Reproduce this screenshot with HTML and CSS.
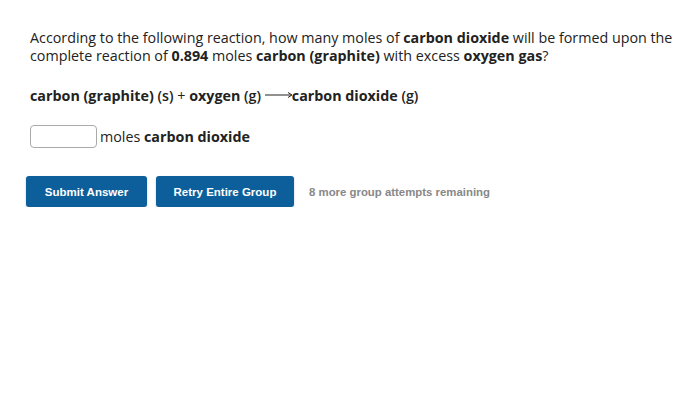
FILE: index.html
```html
<!DOCTYPE html>
<html>
<head>
<meta charset="utf-8">
<link rel="stylesheet" href="styles.css">
</head>
<body>
<div class="page">
  <p class="question">According to the following reaction, how many moles of <b>carbon dioxide</b> will be formed upon the complete reaction of <b>0.894</b> moles <b>carbon (graphite)</b> with excess <b>oxygen gas</b>?</p>
  <p class="reaction"><b>carbon (graphite)</b> <span class="st">(s)</span> + <b>oxygen</b> <span class="st">(g)</span> <span class="arrow"><svg width="28" height="8" viewBox="0 0 28 8"><line x1="0" y1="4" x2="26" y2="4" stroke="#222" stroke-width="1"/><path d="M23 1.5 L27 4 L23 6.5" fill="none" stroke="#222" stroke-width="1"/></svg></span><b>carbon dioxide</b> <span class="st">(g)</span></p>
  <div class="answer">
    <input class="box" type="text">
    <span>moles <b>carbon dioxide</b></span>
  </div>
  <div class="actions">
    <button class="btn btn-submit">Submit Answer</button>
    <button class="btn btn-retry">Retry Entire Group</button>
    <span class="remaining">8 more group attempts remaining</span>
  </div>
</div>
</body>
</html>
```
FILE: styles.css
```css
html, body {
  margin: 0;
  padding: 0;
  background: #fff;
}
.page {
  padding: 29px 10px 0 30px;
  font-family: "Open Sans", sans-serif;
  font-size: 14.3px;
  color: #222;
}
.question {
  margin: 0;
  line-height: 18px;
  width: 660px;
}
.question b, .reaction b, .answer b {
  font-weight: 700;
}
.reaction {
  margin: 22px 0 0 0;
  line-height: 18px;
}
.st { font-weight: 600; }
.arrow {
  display: inline-block;
  vertical-align: middle;
  margin: 0 -1px 0 0;
  position: relative;
  top: -2px;
}
.arrow svg { display: block; }
.answer {
  display: flex;
  align-items: center;
  gap: 3px;
  margin-top: 20px;
}
.box {
  width: 67px;
  height: 23px;
  box-sizing: border-box;
  border: 1px solid #aaa;
  border-radius: 4px;
  padding: 0;
  margin: 0;
}
.actions {
  display: flex;
  align-items: center;
  margin-top: 28px;
  margin-left: -4px;
}
.btn {
  height: 31px;
  background: #0c5f9b;
  color: #fff;
  border: none;
  border-radius: 3px;
  font-family: "Liberation Sans", Arial, sans-serif;
  font-weight: 700;
  font-size: 11.5px;
  padding: 0;
  box-shadow: 0 1px 2px rgba(0,0,0,0.25);
}
.btn-submit { width: 121px; margin-right: 9px; }
.btn-retry { width: 138px; margin-right: 15px; }
.remaining {
  font-family: "Liberation Sans", Arial, sans-serif;
  font-weight: 700;
  font-size: 11.4px;
  color: #888;
}
```
